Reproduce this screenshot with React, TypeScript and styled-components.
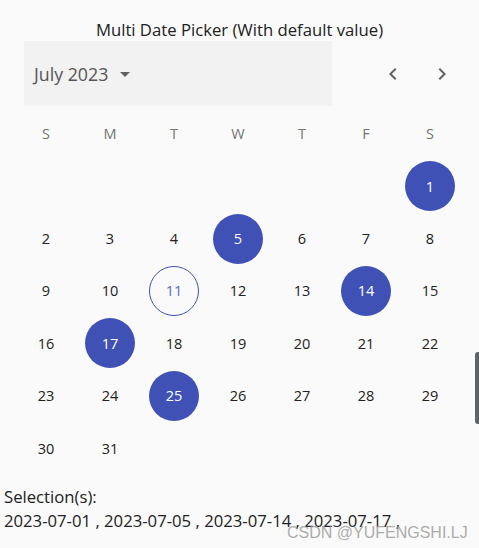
import React from 'react';
import styled, { createGlobalStyle } from 'styled-components';

const GlobalStyle = createGlobalStyle`
  html, body {
    margin: 0;
    padding: 0;
    overflow: hidden;
    background: #fafafa;
  }
  body {
    font-family: 'Open Sans', 'Noto Sans', sans-serif;
    color: #212121;
  }
`;

const Page = styled.div`
  position: relative;
  width: 479px;
  height: 548px;
  overflow: hidden;
  padding-top: 19px;
  box-sizing: border-box;
`;

const Title = styled.div`
  text-align: center;
  font-size: 16.7px;
  line-height: 22px;
  color: #212121;
`;

const Header = styled.div`
  display: flex;
  align-items: center;
  height: 65px;
`;

const MonthButton = styled.div`
  display: flex;
  align-items: center;
  gap: 5px;
  margin-left: 24px;
  width: 308px;
  height: 65px;
  padding-left: 10px;
  box-sizing: border-box;
  background: #f2f2f2;
  font-size: 17.8px;
  color: #555555;
`;

const NavGroup = styled.div`
  display: flex;
  margin-left: 49px;
  gap: 25px;
`;

const NavButton = styled.div`
  width: 24px;
  height: 24px;
  display: flex;
  align-items: center;
  justify-content: center;
  color: #616161;
`;

const Grid = styled.div`
  display: grid;
  grid-template-columns: repeat(7, 64px);
  grid-auto-rows: 52.4px;
  margin-left: 14px;
`;

const WeekRow = styled(Grid)`
  grid-auto-rows: 54px;
`;

const WeekDay = styled.div`
  display: flex;
  align-items: center;
  justify-content: center;
  font-size: 14.5px;
  color: #757575;
`;

const Cell = styled.div`
  display: flex;
  align-items: center;
  justify-content: center;
`;

const Day = styled.div<{ $selected?: boolean; $today?: boolean }>`
  width: 50px;
  height: 50px;
  border-radius: 50%;
  box-sizing: border-box;
  display: flex;
  align-items: center;
  justify-content: center;
  font-size: 14.5px;
  color: ${(p) => (p.$selected ? '#ffffff' : p.$today ? '#5c6bc0' : '#212121')};
  background: ${(p) => (p.$selected ? '#3f51b5' : 'transparent')};
  border: ${(p) => (p.$today ? '1px solid #3f51b5' : 'none')};
`;

const Selection = styled.div`
  margin-top: 11px;
  padding-left: 4px;
  font-size: 16.7px;
  line-height: 24px;
  color: #212121;
  max-height: 48px;
  overflow: hidden;
`;

const DateText = styled.span`
  white-space: nowrap;
`;

const Watermark = styled.div`
  position: absolute;
  left: 287px;
  top: 523px;
  font-family: 'Liberation Sans', Arial, sans-serif;
  font-size: 16px;
  line-height: 20px;
  color: rgba(150, 150, 150, 0.8);
  white-space: nowrap;
`;

const ScrollThumb = styled.div`
  position: absolute;
  left: 475px;
  top: 352px;
  width: 6px;
  height: 72px;
  border-radius: 3px;
  background: #5f6368;
`;

const weekDays = ['S', 'M', 'T', 'W', 'T', 'F', 'S'];
const selected = [1, 5, 14, 17, 25];
const today = 11;
const firstWeekday = 6; // 1 July 2023 falls on a Saturday

const pad = (n: number) => (n < 10 ? '0' + n : '' + n);

const App: React.FC = () => {
  const cells: (number | null)[] = [];
  for (let i = 0; i < firstWeekday; i++) cells.push(null);
  for (let d = 1; d <= 31; d++) cells.push(d);

  return (
    <Page>
      <GlobalStyle />
      <Title>Multi Date Picker (With default value)</Title>
      <Header>
        <MonthButton>
          <span>July 2023</span>
          <svg width="24" height="24" viewBox="0 0 24 24" fill="#616161">
            <path d="M7 10l5 5 5-5z" />
          </svg>
        </MonthButton>
        <NavGroup>
          <NavButton>
            <svg width="24" height="24" viewBox="0 0 24 24" fill="currentColor">
              <path d="M15.41 7.41L14 6l-6 6 6 6 1.41-1.41L10.83 12z" />
            </svg>
          </NavButton>
          <NavButton>
            <svg width="24" height="24" viewBox="0 0 24 24" fill="currentColor">
              <path d="M8.59 16.59L10 18l6-6-6-6-1.41 1.41L13.17 12z" />
            </svg>
          </NavButton>
        </NavGroup>
      </Header>
      <WeekRow>
        {weekDays.map((w, i) => (
          <WeekDay key={i}>{w}</WeekDay>
        ))}
      </WeekRow>
      <Grid>
        {cells.map((d, i) => (
          <Cell key={i}>
            {d && (
              <Day $selected={selected.includes(d)} $today={d === today}>
                {d}
              </Day>
            )}
          </Cell>
        ))}
      </Grid>
      <Selection>
        Selection(s):
        <br />
        {selected.map((d, i) => (
          <React.Fragment key={d}>
            <DateText>{'2023-07-' + pad(d)}</DateText>
            {i < selected.length - 1 ? ' , ' : ''}
          </React.Fragment>
        ))}
      </Selection>
      <Watermark>CSDN @YUFENGSHI.LJ</Watermark>
      <ScrollThumb />
    </Page>
  );
};

export default App;
